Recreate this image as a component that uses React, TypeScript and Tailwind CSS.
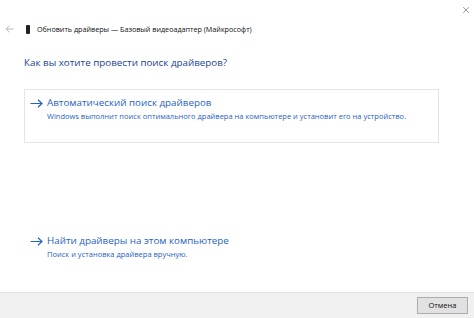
import { X } from "lucide-react";

function ArrowRight() {
  return (
    <svg width="13" height="9" viewBox="0 0 13 9" className="shrink-0">
      <path d="M0.5 4.5H12M8 0.8L12 4.5L8 8.2" fill="none" stroke="#1f64c8" strokeWidth="1.2" />
    </svg>
  );
}

function Option({ title, desc }: { title: string; desc: string }) {
  return (
    <div className="flex flex-col">
      <div className="flex items-center gap-[4px]">
        <ArrowRight />
        <span className="text-[9.8px] leading-[14px] text-[#1f5fbf]">{title}</span>
      </div>
      <p className="pl-[17px] text-[7.5px] leading-[12px] text-[#1f5fbf]">{desc}</p>
    </div>
  );
}

export default function App() {
  return (
    <div className="flex h-[318px] w-[474px] flex-col bg-white font-['Open_Sans','Noto_Sans',sans-serif] text-black">
      <div className="flex h-[20px] items-center justify-end pr-[3px]">
        <X className="size-[10px] text-[#444]" strokeWidth={1.3} />
      </div>

      <div className="flex h-[18px] items-center pl-[5px]">
        <svg width="9" height="8" viewBox="0 0 9 8" className="text-[#bbb]">
          <path d="M8.5 4H1M4.5 0.6L1 4l3.5 3.4" fill="none" stroke="currentColor" strokeWidth="1" />
        </svg>
        <div className="ml-[12px] h-[9px] w-[4px] rounded-[1px] bg-[#222]" />
        <span className="ml-[7px] text-[7.2px] text-[#111]">
          Обновить драйверы — Базовый видеоадаптер (Майкрософт)
        </span>
      </div>

      <h1 className="mt-[17px] pl-[24px] text-[9.8px] leading-[16px] text-[#1b3f91]">
        Как вы хотите провести поиск драйверов?
      </h1>

      <div className="mx-[24px] mt-[18px] h-[54px] w-[415px] border border-[#e4e4e4] pl-[5px] pt-[6px]">
        <Option
          title="Автоматический поиск драйверов"
          desc="Windows выполнит поиск оптимального драйвера на компьютере и установит его на устройство."
        />
      </div>

      <div className="mt-[91px] pl-[30px]">
        <Option title="Найти драйверы на этом компьютере" desc="Поиск и установка драйвера вручную." />
      </div>

      <div className="mt-auto flex h-[26px] items-center justify-end border-t border-[#e2e2e2] bg-[#f0f0f0] pr-[6px]">
        <button className="h-[17px] w-[51px] shrink-0 border border-[#adadad] bg-[#e1e1e1] text-[7.5px] leading-none text-[#111]">
          Отмена
        </button>
      </div>
    </div>
  );
}
